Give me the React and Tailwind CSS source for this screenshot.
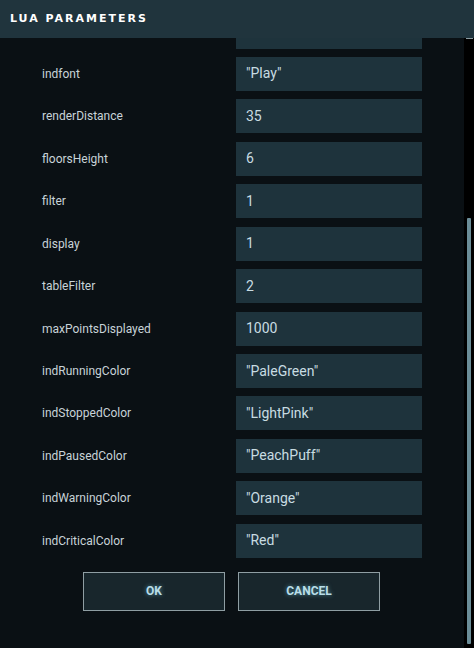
import React from "react";

const rows = [
  ["indfont", '"Play"'],
  ["renderDistance", "35"],
  ["floorsHeight", "6"],
  ["filter", "1"],
  ["display", "1"],
  ["tableFilter", "2"],
  ["maxPointsDisplayed", "1000"],
  ["indRunningColor", '"PaleGreen"'],
  ["indStoppedColor", '"LightPink"'],
  ["indPausedColor", '"PeachPuff"'],
  ["indWarningColor", '"Orange"'],
  ["indCriticalColor", '"Red"'],
];

export default function App() {
  return (
    <div
      className="w-[474px] h-[648px] bg-[#0a1014] flex flex-col overflow-hidden"
      style={{ fontFamily: "Roboto, 'Noto Sans', sans-serif" }}
    >
      <div className="h-[38px] shrink-0 bg-[#20343d] flex items-center pl-[10px]">
        <span
          className="text-white font-bold text-[11px] tracking-[2px] uppercase"
          style={{ fontFamily: "'DejaVu Sans', sans-serif" }}
        >
          LUA PARAMETERS
        </span>
      </div>
      <div className="flex flex-1 min-h-0">
        <div className="w-[464px] flex flex-col">
          <div className="h-[10.5px] flex">
            <div className="ml-[236px] w-[186px] bg-[#1e333c]" />
          </div>
          <div className="flex flex-col gap-[8.45px] mt-[8.45px]">
            {rows.map(([k, v]) => (
              <div key={k} className="flex items-center h-[34px]">
                <div className="w-[236px] pl-[42px] text-[12px] text-[#c8d3d8]">{k}</div>
                <div className="w-[186px] h-full bg-[#1e333c] flex items-center pl-[10px] text-[14px] text-[#c8dce2]">
                  {v}
                </div>
              </div>
            ))}
          </div>
          <div className="flex gap-[13px] mt-[14px] pl-[83px]">
            <button className="w-[142px] h-[39px] border border-[#8f9ea3] bg-[#18262c] text-[12px] font-bold text-[#b9dde8] [text-shadow:0_0_4px_rgba(120,210,230,0.6)]">
              OK
            </button>
            <button className="w-[142px] h-[39px] border border-[#8f9ea3] bg-[#18262c] text-[12px] font-bold text-[#b9dde8] [text-shadow:0_0_4px_rgba(120,210,230,0.6)]">
              CANCEL
            </button>
          </div>
        </div>
        <div className="w-[10px] bg-black flex flex-col items-center">
          <div className="h-px w-[7px] bg-[#8a9ba0]" />
          <div className="mt-[179px] w-[4px] h-[426px] bg-[#6b8d98] rounded-[1px]" />
        </div>
      </div>
    </div>
  );
}
